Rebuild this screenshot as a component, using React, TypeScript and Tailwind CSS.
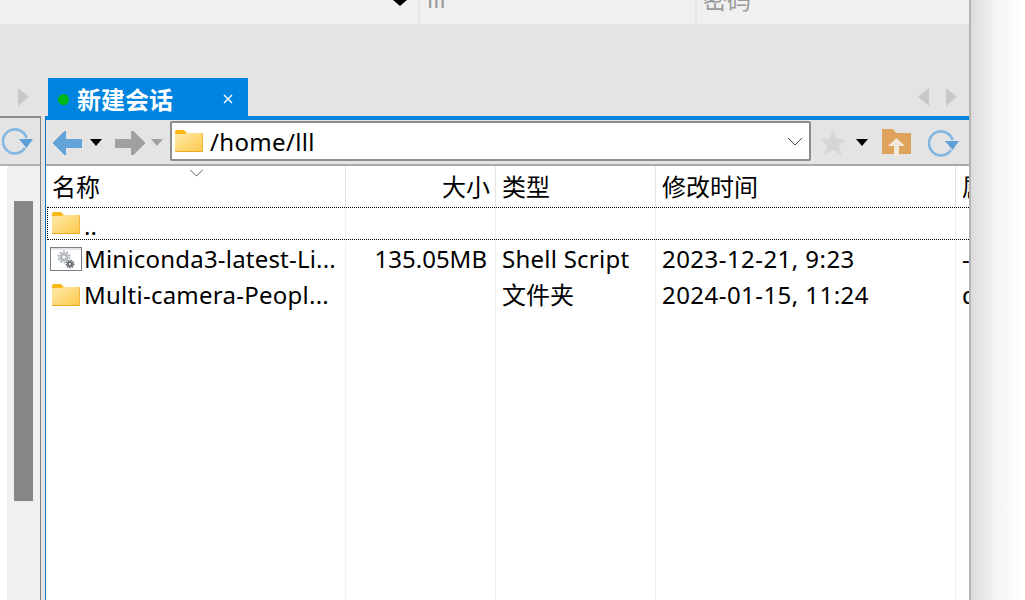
const FONT = '"Noto Sans", "Noto Sans CJK SC", sans-serif';

const COLS = 'grid grid-cols-[300px_150px_160px_300px_1fr]';

const Folder = ({ className }: { className?: string }) => (
  <svg viewBox="0 0 28 22" className={className}>
    <defs>
      <linearGradient id="folderFill" x1="0" y1="0" x2="1" y2="1">
        <stop offset="0" stopColor="#ffe9a8" />
        <stop offset="1" stopColor="#fdc94c" />
      </linearGradient>
    </defs>
    <path d="M0 2 Q0 0 2 0 H9 L12 3 H28 V5 H0 Z" fill="#fbb716" />
    <path d="M0 4 H9 L12 3 H28 V22 H0 Z" fill="url(#folderFill)" />
    <path d="M0 21 H28 V22 H0 Z" fill="#eeaa22" />
    <path d="M27 3 H28 V22 H27 Z" fill="#f1b73e" />
  </svg>
);

const ScriptIcon = () => (
  <svg viewBox="0 0 32 24" className="h-6 w-8">
    <rect x="0.5" y="0.5" width="31" height="23" fill="#fff" stroke="#7f7f7f" />
    <path d="M1 1 H31 V3 H1 Z" fill="#e4e4e4" />
    <circle cx="14" cy="10" r="4.5" fill="#b4b8bf" />
    <circle cx="14" cy="10" r="5.5" fill="none" stroke="#b4b8bf" strokeWidth="2" strokeDasharray="2 1.45" />
    <circle cx="14" cy="10" r="1.6" fill="#fff" />
    <circle cx="20" cy="17" r="3" fill="#6a6f76" />
    <circle cx="20" cy="17" r="3.7" fill="none" stroke="#6a6f76" strokeWidth="1.5" strokeDasharray="1.5 .95" />
    <circle cx="20" cy="17" r="1" fill="#fff" />
  </svg>
);

const Refresh = ({ className }: { className?: string }) => (
  <svg viewBox="0 0 32 28" className={className}>
    <path d="M24.5 11 A12 12 0 1 0 23 21" fill="none" stroke="#84b6e2" strokeWidth="2.6" />
    <path d="M17 12 H31 L24.5 21 Z" fill="#5f9fd9" />
  </svg>
);

const Caret = ({ color = '#000' }: { color?: string }) => (
  <svg viewBox="0 0 12 7" className="h-[7px] w-3">
    <path d="M0 0 H12 L6 7 Z" fill={color} />
  </svg>
);

const Chevron = ({ className }: { className?: string }) => (
  <svg viewBox="0 0 16 9" className={className}>
    <path d="M1 1 L8 8 L15 1" fill="none" stroke="#444" strokeWidth="1" />
  </svg>
);

const Arrow = ({ dir, color }: { dir: 'left' | 'right'; color: string }) => (
  <svg viewBox="0 0 30 24" className="h-6 w-[30px]" shapeRendering="crispEdges">
    <path
      d={dir === 'left'
        ? 'M0 12 L12 0 H14 V8 H30 V17 H14 V24 H12 Z'
        : 'M30 12 L18 0 H16 V8 H0 V17 H16 V24 H18 Z'}
      fill={color}
    />
  </svg>
);

const Tri = ({ dir }: { dir: 'left' | 'right' }) => (
  <svg viewBox="0 0 11 18" className="h-[18px] w-[11px]">
    <path d={dir === 'left' ? 'M11 0 V18 L0 9 Z' : 'M0 0 V18 L11 9 Z'} fill="#c8c8c8" />
  </svg>
);

const headCell = 'flex h-full items-center whitespace-nowrap border-r border-[#e4e4e4] px-[6px]';
const rowCell = 'flex items-center border-r border-[#eaf0f7] px-[6px] whitespace-nowrap';
const lastCell = 'flex items-center overflow-hidden whitespace-nowrap pl-[6px]';

export default function App() {
  return (
    <div className="flex h-[600px] w-[1025px] overflow-hidden bg-white text-[24px] text-black" style={{ fontFamily: FONT }}>
      <div className="flex w-[971px] shrink-0 flex-col border-r-2 border-[#b4b4b4] bg-[#e4e4e4]">
        {/* session bar, cut by the top of the shot */}
        <div className="flex h-6 shrink-0 overflow-hidden bg-[#f0f0f0]">
          <div className="relative w-[420px] border-r-2 border-[#e6e6e6]">
            <svg viewBox="0 0 14 6" className="absolute left-[393px] top-0 h-[6px] w-[14px]">
              <path d="M0 0 H14 L7 6 Z" fill="#000" />
            </svg>
          </div>
          <div className="w-[277px] border-r-2 border-[#e6e6e6] pl-[7px]">
            <span className="-mt-[18px] block text-[24px] leading-[34px] text-[#9a9a9a]">lll</span>
          </div>
          <div className="pl-[6px]">
            <span className="-mt-[17px] block text-[24px] leading-[34px] text-[#9a9a9a]">密码</span>
          </div>
        </div>

        {/* tab row */}
        <div className="mt-[54px] flex h-[38px] shrink-0 items-center pl-[18px] pr-3">
          <Tri dir="right" />
          <div className="ml-[19px] flex h-full w-[200px] items-center bg-[#0084e0] pl-[10px] pr-[15px] pt-1 font-bold text-white">
            <span className="h-[11px] w-[11px] rounded-full bg-[#00b81a]" />
            <span className="ml-2 mt-[2px] flex-1 leading-none">新建会话</span>
            <svg viewBox="0 0 10 10" className="h-[10px] w-[10px]">
              <path d="M1 1 L9 9 M9 1 L1 9" stroke="#fff" strokeWidth="1.4" />
            </svg>
          </div>
          <div className="ml-auto flex gap-[17px]">
            <Tri dir="left" />
            <Tri dir="right" />
          </div>
        </div>

        <div className="flex min-h-0 flex-1">
          {/* left pane, mostly off screen */}
          <div className="flex w-[41px] shrink-0 flex-col border-r border-[#808080] border-t-2 border-t-[#8c8c8c]">
            <div className="flex h-12 shrink-0 items-center overflow-hidden border-b-2 border-[#b0b0b0] pl-[2px]">
              <Refresh className="h-7 w-8 shrink-0" />
            </div>
            <div className="flex min-h-0 flex-1 bg-white">
              <div className="ml-[7px] flex-1 bg-[#f0f0f0] pl-[7px] pt-[35px]">
                <div className="h-[300px] w-[19px] bg-[#868686]" />
              </div>
            </div>
          </div>

          {/* right pane */}
          <div className="ml-1 flex min-w-0 flex-1 flex-col border-l border-t-4 border-[#0084e0] border-l-[#1a70b8]">
            <div className="flex h-[46px] shrink-0 items-start border-b-2 border-[#a8a8a8]">
              <div className="ml-[6px] mt-[11px]"><Arrow dir="left" color="#64a3d8" /></div>
              <div className="ml-2 mt-[19px]"><Caret /></div>
              <div className="ml-[13px] mt-[11px]"><Arrow dir="right" color="#a0a0a0" /></div>
              <div className="ml-[6px] mt-[19px]"><Caret color="#a0a0a0" /></div>
              <div className="ml-[7px] mt-px flex h-10 w-[641px] items-center rounded-[2px] border-2 border-[#8c8c8c] bg-white pl-[3px] pr-[6px]">
                <Folder className="h-[22px] w-7" />
                <span className="ml-[7px] mt-[2px] flex-1 leading-none tracking-[0.35px]">/home/lll</span>
                <Chevron className="h-[9px] w-4" />
              </div>
              <svg viewBox="0 0 26 25" className="ml-[9px] mt-[10px] h-[25px] w-[26px]">
                <path d="M13 0 L17 9 L26 9.5 L19 15.5 L21.5 25 L13 20 L4.5 25 L7 15.5 L0 9.5 L9 9 Z" fill="#d6d6d6" />
              </svg>
              <div className="ml-[10px] mt-[19px]"><Caret /></div>
              <svg viewBox="0 0 29 28" className="ml-[14px] mt-[9px] h-7 w-[29px]">
                <path d="M0 0 H11 L14 4 H29 V25 H0 Z" fill="#dfa35e" />
                <path d="M14.5 9 L23 17 H17 V28 H12 V17 H6 Z" fill="#f0e8dc" />
              </svg>
              <Refresh className="ml-[17px] mt-[9px] h-7 w-8" />
            </div>

            <div className="flex min-h-0 flex-1 flex-col bg-white">
              {/* header */}
              <div className={`${COLS} relative h-[41px] shrink-0`}>
                <div className={headCell}>名称</div>
                <div className={`${headCell} justify-end !pr-[5px]`}>大小</div>
                <div className={headCell}>类型</div>
                <div className={headCell}>修改时间</div>
                <div className={lastCell}>属性</div>
                <Chevron className="absolute left-[143px] top-[3px] h-2 w-[15px]" />
              </div>

              {/* parent folder row, focused */}
              <div className={`${COLS} relative h-[33px] shrink-0`}>
                <div className={`${rowCell} pt-[5px]`}>
                  <Folder className="-mt-[7px] h-[22px] w-7 shrink-0" />
                  <span className="ml-1 leading-none">..</span>
                </div>
                <div className={rowCell} />
                <div className={rowCell} />
                <div className={rowCell} />
                <div />
                <span className="absolute inset-y-0 left-px right-0 border-y border-l border-dotted border-black" />
              </div>

              <div className={`${COLS} mt-px h-9 shrink-0`}>
                <div className={`${rowCell} !pl-1`}>
                  <ScriptIcon />
                  <span className="ml-[2px] tracking-[0.2px]">Miniconda3-latest-Li...</span>
                </div>
                <div className={`${rowCell} justify-end !pr-2`}>135.05MB</div>
                <div className={`${rowCell} tracking-[0.25px]`}>Shell Script</div>
                <div className={`${rowCell} tracking-[0.45px]`}>2023-12-21, 9:23</div>
                <div className={lastCell}>-rwxr</div>
              </div>

              <div className={`${COLS} h-[31px] shrink-0`}>
                <div className={rowCell}>
                  <Folder className="h-[22px] w-7 shrink-0" />
                  <span className="ml-1 tracking-[0.25px]">Multi-camera-Peopl...</span>
                </div>
                <div className={rowCell} />
                <div className={rowCell}>文件夹</div>
                <div className={`${rowCell} tracking-[0.45px]`}>2024-01-15, 11:24</div>
                <div className={lastCell}>drwxr</div>
              </div>

              {/* column lines run on to the bottom */}
              <div className={`${COLS} min-h-0 flex-1`}>
                <div className={rowCell} />
                <div className={rowCell} />
                <div className={rowCell} />
                <div className={rowCell} />
                <div />
              </div>
            </div>
          </div>
        </div>
      </div>

      {/* window shadow */}
      <div className="flex-1 bg-gradient-to-r from-[#dcdcdc] via-[#f6f6f6] to-white" />
    </div>
  );
}
